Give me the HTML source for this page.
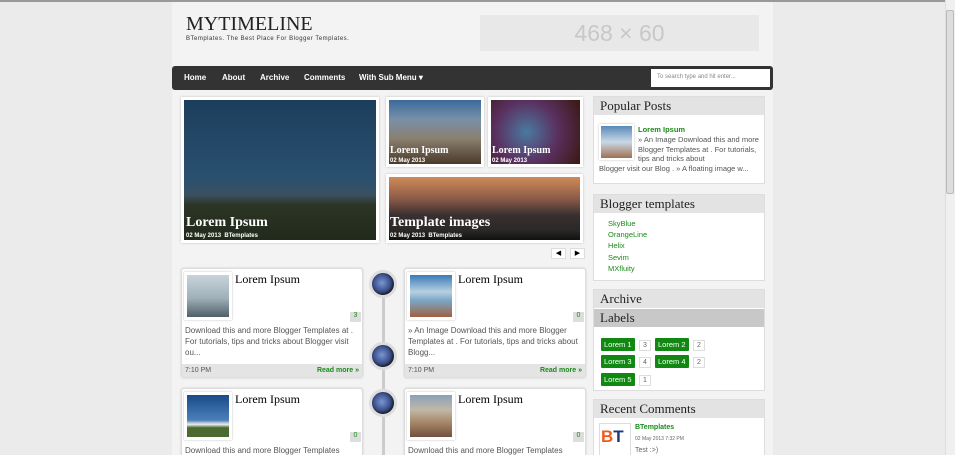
<!DOCTYPE html><html><head><style>
*{margin:0;padding:0;box-sizing:border-box}
html,body{width:955px;height:455px;overflow:hidden}
body{background:#ebebeb;font-family:"Liberation Sans",sans-serif;position:relative}
.a{position:absolute}
.serif{font-family:"Liberation Serif",serif}
.img{border:3px solid #fff;box-shadow:0 0 2px #bbb}
.ft{color:#fff;font-family:"Liberation Serif",serif;font-weight:bold}
.sm{color:#fff;font-size:6px;font-weight:bold}
.card{background:#fff;border:1px solid #ddd;border-radius:3px;box-shadow:0 0 2px #ccc}
.wh{background:#fff;border:1px solid #ddd}
.hd{background:#e3e3e3;font-family:"Liberation Serif",serif;font-size:13px;color:#222;padding:1px 6px;height:18px}
.g{color:#1a8a1a}
.lb{background:#118811;color:#fff;font-size:7.5px;padding:2px 3px;border-radius:1px}
.ct{border:1px solid #ddd;font-size:7px;color:#666;padding:1px 3px;background:#fff}
.av{width:28px;height:28px;border-radius:50%;background:radial-gradient(circle at 45% 45%,#7b96d4,#3a4f8a 50%,#111 75%);border:3px solid #ddd}
.tx{font-size:8px;color:#555;line-height:11px}
.nv{top:73px;font-size:8px;color:#fff;font-weight:bold}
</style></head><body>
<div class="a" style="left:172px;top:0;width:601px;height:455px;background:#f3f3f3"></div>
<div class="a" style="left:0;top:0;width:955px;height:2px;background:#999"></div>
<div class="a" style="left:945px;top:0;width:10px;height:455px;background:#f0f0f0;border-left:1px solid #ddd"></div>
<div class="a" style="left:946px;top:10px;width:8px;height:184px;background:#ddd;border:1px solid #bbb;border-radius:2px"></div>
<div class="a serif" style="left:186px;top:13px;font-size:20px;color:#222">MYTIMELINE</div>
<div class="a" style="left:186px;top:36px;font-size:6px;color:#333;letter-spacing:.5px">BTemplates. The Best Place For Blogger Templates.</div>
<div class="a" style="left:480px;top:15px;width:279px;height:36px;background:#e8e8e8;color:#c8c8c8;font-size:23px;text-align:center;line-height:36px">468 × 60</div>
<div class="a" style="left:172px;top:66px;width:601px;height:24px;background:#333;border-radius:3px"></div>
<div class="a nv" style="left:184px">Home</div>
<div class="a nv" style="left:222px">About</div>
<div class="a nv" style="left:260px">Archive</div>
<div class="a nv" style="left:304px">Comments</div>
<div class="a nv" style="left:359px">With Sub Menu ▾</div>
<div class="a" style="left:651px;top:69px;width:119px;height:18px;background:#fff;font-size:6px;color:#888;padding:5px 6px">To search type and hit enter...</div>
<!-- featured -->
<div class="a img" style="left:181px;top:97px;width:198px;height:146px;background:linear-gradient(#1c3e5c,#2a5070 55%,#3a5060 68%,#2c3424 75%,#222a1c)"></div>
<div class="a ft" style="left:186px;top:215px;font-size:14px">Lorem Ipsum</div>
<div class="a sm" style="left:186px;top:233px">02 May 2013 &nbsp;BTemplates</div>
<div class="a img" style="left:386px;top:97px;width:98px;height:70px;background:linear-gradient(#3a6a9a,#7890a8 30%,#8a8070 60%,#4a3a2a)"></div>
<div class="a ft" style="left:390px;top:145px;font-size:10px">Lorem Ipsum</div><div class="a sm" style="left:390px;top:158px">02 May 2013</div>
<div class="a img" style="left:488px;top:97px;width:95px;height:70px;background:radial-gradient(circle at 40% 50%,#4a7aa0,#5a3060 50%,#3a1810)"></div>
<div class="a ft" style="left:492px;top:145px;font-size:10px">Lorem Ipsum</div><div class="a sm" style="left:492px;top:158px">02 May 2013</div>
<div class="a img" style="left:386px;top:174px;width:197px;height:69px;background:linear-gradient(#d08a58,#8a5a48 35%,#3a3030 60%,#2a2826 85%,#111)"></div>
<div class="a ft" style="left:390px;top:215px;font-size:14px">Template images</div>
<div class="a sm" style="left:390px;top:233px">02 May 2013 &nbsp;BTemplates</div>
<div class="a wh" style="left:551px;top:248px;width:15px;height:11px;font-size:7px;text-align:center">◀</div>
<div class="a wh" style="left:570px;top:248px;width:15px;height:11px;font-size:7px;text-align:center">▶</div>
<!-- timeline -->
<div class="a" style="left:382px;top:280px;width:3px;height:175px;background:#ccc"></div>
<div class="a card" style="left:181px;top:268px;width:182px;height:110px"></div>
<div class="a img" style="left:184px;top:272px;width:48px;height:48px;background:linear-gradient(#c8d4dc,#a0b0b8 55%,#506068)"></div>
<div class="a serif" style="left:235px;top:272px;font-size:12px">Lorem Ipsum</div>
<div class="a" style="left:350px;top:312px;width:11px;height:10px;background:#ddd;font-size:7px;color:#1a8a1a;text-align:center">3</div>
<div class="a tx" style="left:185px;top:325px;width:178px">Download this and more Blogger Templates at . For tutorials, tips and tricks about Blogger visit ou...</div>
<div class="a" style="left:182px;top:364px;width:180px;height:13px;background:#e4e4e4;font-size:7px;color:#555;padding:3px 3px">7:10 PM<span class="g" style="float:right;font-weight:bold">Read more »</span></div>
<div class="a card" style="left:404px;top:268px;width:182px;height:110px"></div>
<div class="a img" style="left:407px;top:272px;width:48px;height:48px;background:linear-gradient(#3a7ab8,#b8d0e0 40%,#7aa8c8 60%,#a06040)"></div>
<div class="a serif" style="left:458px;top:272px;font-size:12px">Lorem Ipsum</div>
<div class="a" style="left:573px;top:312px;width:11px;height:10px;background:#ddd;font-size:7px;color:#1a8a1a;text-align:center">0</div>
<div class="a tx" style="left:408px;top:325px;width:175px">» An Image Download this and more Blogger Templates at . For tutorials, tips and tricks about Blogg...</div>
<div class="a" style="left:405px;top:364px;width:180px;height:13px;background:#e4e4e4;font-size:7px;color:#555;padding:3px 3px">7:10 PM<span class="g" style="float:right;font-weight:bold">Read more »</span></div>
<div class="a card" style="left:181px;top:388px;width:182px;height:80px"></div>
<div class="a img" style="left:184px;top:392px;width:48px;height:48px;background:linear-gradient(#1a4a8a,#4a80b8 60%,#eee 70%,#4a6a30 78%)"></div>
<div class="a serif" style="left:235px;top:392px;font-size:12px">Lorem Ipsum</div>
<div class="a" style="left:350px;top:432px;width:11px;height:10px;background:#ddd;font-size:7px;color:#1a8a1a;text-align:center">0</div>
<div class="a tx" style="left:185px;top:445px">Download this and more Blogger Templates</div>
<div class="a card" style="left:404px;top:388px;width:182px;height:80px"></div>
<div class="a img" style="left:407px;top:392px;width:48px;height:48px;background:linear-gradient(#8aa0b8,#c0b8a8 35%,#a08060 70%,#705040)"></div>
<div class="a serif" style="left:458px;top:392px;font-size:12px">Lorem Ipsum</div>
<div class="a" style="left:573px;top:432px;width:11px;height:10px;background:#ddd;font-size:7px;color:#1a8a1a;text-align:center">0</div>
<div class="a tx" style="left:408px;top:445px">Download this and more Blogger Templates</div>
<div class="a av" style="left:369px;top:270px"></div>
<div class="a av" style="left:369px;top:342px"></div>
<div class="a av" style="left:369px;top:389px"></div>
<!-- sidebar -->
<div class="a wh" style="left:593px;top:96px;width:172px;height:88px"></div>
<div class="a hd" style="left:594px;top:97px;width:170px">Popular Posts</div>
<div class="a img" style="left:599px;top:124px;width:35px;height:36px;border-width:2px;background:linear-gradient(#5a88b8,#c8d8e8 50%,#a07050)"></div>
<div class="a g" style="left:638px;top:125px;font-size:7.5px;font-weight:bold">Lorem Ipsum</div>
<div class="a" style="left:638px;top:135px;width:125px;font-size:7.5px;color:#555;line-height:9.7px">» An Image Download this and more Blogger Templates at . For tutorials, tips and tricks about</div>
<div class="a" style="left:599px;top:164px;font-size:7.5px;color:#555">Blogger visit our Blog . » A floating image w...</div>
<div class="a wh" style="left:593px;top:194px;width:172px;height:87px"></div>
<div class="a hd" style="left:594px;top:195px;width:170px">Blogger templates</div>
<div class="a g" style="left:608px;top:218px;font-size:7.5px;line-height:11.2px">SkyBlue<br>OrangeLine<br>Helix<br>Sevim<br>MXfluity</div>
<div class="a wh" style="left:593px;top:289px;width:172px;height:102px"></div>
<div class="a hd" style="left:594px;top:290px;width:170px">Archive</div>
<div class="a hd" style="left:594px;top:309px;width:170px;background:#c8c8c8">Labels</div>
<div class="a" style="left:601px;top:334px"><span class="lb">Lorem 1</span> <span class="ct">3</span></div>
<div class="a" style="left:655px;top:334px"><span class="lb">Lorem 2</span> <span class="ct">2</span></div>
<div class="a" style="left:601px;top:351px"><span class="lb">Lorem 3</span> <span class="ct">4</span></div>
<div class="a" style="left:655px;top:351px"><span class="lb">Lorem 4</span> <span class="ct">2</span></div>
<div class="a" style="left:601px;top:369px"><span class="lb">Lorem 5</span> <span class="ct">1</span></div>
<div class="a wh" style="left:593px;top:399px;width:172px;height:60px"></div>
<div class="a hd" style="left:594px;top:400px;width:170px">Recent Comments</div>
<div class="a wh" style="left:599px;top:423px;width:32px;height:35px;font-size:17px;font-weight:bold;padding:3px 1px"><span style="color:#f05a1a">B</span><span style="color:#1a3a7a">T</span></div>
<div class="a g" style="left:635px;top:424px;font-size:7px;font-weight:bold">BTemplates</div>
<div class="a" style="left:635px;top:436px;font-size:5px;color:#666">02 May 2013 7:32 PM</div>
<div class="a" style="left:635px;top:447px;font-size:7px;color:#666">Test :>)</div>
</body></html>
